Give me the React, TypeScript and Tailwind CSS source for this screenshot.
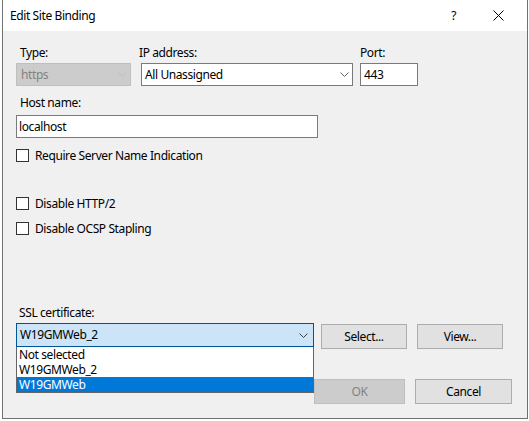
import React from "react";

/* small windows-style chevron used by the combo boxes */
function Chevron({ color }: { color: string }) {
  return (
    <svg width="9" height="5" viewBox="0 0 9 5" className="shrink-0">
      <path d="M0.5 0.5 L4.5 4.5 L8.5 0.5" fill="none" stroke={color} strokeWidth="1" />
    </svg>
  );
}

function CheckRow({ label, className }: { label: string; className: string }) {
  return (
    <div className={`flex items-center h-[13px] ${className}`}>
      <div className="w-[13px] h-[13px] border border-[#333333] bg-white shrink-0" />
      <span className="ml-[6px] leading-[16px] whitespace-nowrap">{label}</span>
    </div>
  );
}

const CERTS = ["Not selected", "W19GMWeb_2", "W19GMWeb"];

export default function App() {
  return (
    <div className="w-[529px] h-[421px] bg-white overflow-hidden font-['Segoe_UI','Noto_Sans',sans-serif] text-[12px] tracking-[-0.4px] text-black">
      <div className="ml-[2px] w-[526px] h-[419px] border-x border-b border-[#707070] bg-[#f0f0f0] flex flex-col">
        {/* Title bar */}
        <div className="h-[31px] bg-white flex items-center shrink-0">
          <span className="ml-[7px] leading-[16px]">Edit Site Binding</span>
          <span className="ml-auto leading-[16px]">?</span>
          <svg width="11" height="11" viewBox="0 0 11 11" className="ml-[37px] mr-[23px]">
            <path d="M0.5 0.5 L10.5 10.5 M10.5 0.5 L0.5 10.5" stroke="#000" strokeWidth="1" />
          </svg>
        </div>

        {/* Body */}
        <div className="flex-1 pl-[13px] pt-[14px] flex flex-col">
          {/* Type / IP / Port */}
          <div className="flex items-start">
            <div className="w-[115px]">
              <div className="pl-[4px] h-[16px] leading-[16px]">Type:</div>
              <div className="mt-[2px] h-[23px] bg-[#cccccc] border border-[#bfbfbf] flex items-center pl-[4px] pr-[3px] text-[#838383]">
                <span className="flex-1">https</span>
                <Chevron color="#bfbfbf" />
              </div>
            </div>
            <div className="w-[212px] ml-[10px]">
              <div className="-ml-[2px] h-[16px] leading-[16px]">IP address:</div>
              <div className="mt-[2px] h-[23px] bg-white border border-[#7a7a7a] flex items-center pl-[3px] pr-[3px]">
                <span className="flex-1">All Unassigned</span>
                <Chevron color="#606060" />
              </div>
            </div>
            <div className="w-[58px] ml-[7px]">
              <div className="h-[16px] leading-[16px]">Port:</div>
              <div className="mt-[2px] h-[23px] bg-white border border-[#7a7a7a] flex items-center pl-[3px]">
                443
              </div>
            </div>
          </div>

          {/* Host name */}
          <div className="mt-[9px] pl-[4px] h-[16px] leading-[16px]">Host name:</div>
          <div className="mt-[4px] w-[302px] h-[23px] bg-white border border-[#7a7a7a] flex items-center pl-[2px]">
            localhost
          </div>

          <CheckRow label="Require Server Name Indication" className="mt-[11px]" />
          <CheckRow label="Disable HTTP/2" className="mt-[35px]" />
          <CheckRow label="Disable OCSP Stapling" className="mt-[12px]" />

          {/* SSL certificate */}
          <div className="mt-[70px] pl-[3px] h-[16px] leading-[16px]">SSL certificate:</div>
          <div className="mt-[2px] flex items-start">
            <div className="relative w-[298px]">
              <div className="h-[24px] bg-[#cce4f7] border border-[#005499] flex items-center pl-[3px] pr-[5px]">
                <span className="flex-1">W19GMWeb_2</span>
                <Chevron color="#404040" />
              </div>
              <div className="absolute left-0 top-full w-[298px] bg-white border-x border-b border-[#646464] z-10">
                {CERTS.map((c, i) => (
                  <div
                    key={c}
                    className={`h-[15px] leading-[15px] pl-[2px] ${
                      i === 2 ? "bg-[#0078d7] text-white" : ""
                    }`}
                  >
                    {c}
                  </div>
                ))}
              </div>
            </div>
            <button className="mt-[1px] ml-[7px] w-[86px] h-[25px] bg-[#e1e1e1] border border-[#adadad]">
              Select...
            </button>
            <button className="mt-[1px] ml-[10px] w-[86px] h-[25px] bg-[#e1e1e1] border border-[#adadad]">
              View...
            </button>
          </div>

          {/* OK / Cancel */}
          <div className="mt-[30px] flex justify-end gap-[10px] pr-[15px]">
            <button className="w-[91px] h-[25px] bg-[#cccccc] border border-[#bfbfbf] text-[#838383]">
              OK
            </button>
            <button className="w-[97px] h-[25px] bg-[#e1e1e1] border border-[#adadad]">
              Cancel
            </button>
          </div>
        </div>
      </div>
    </div>
  );
}
